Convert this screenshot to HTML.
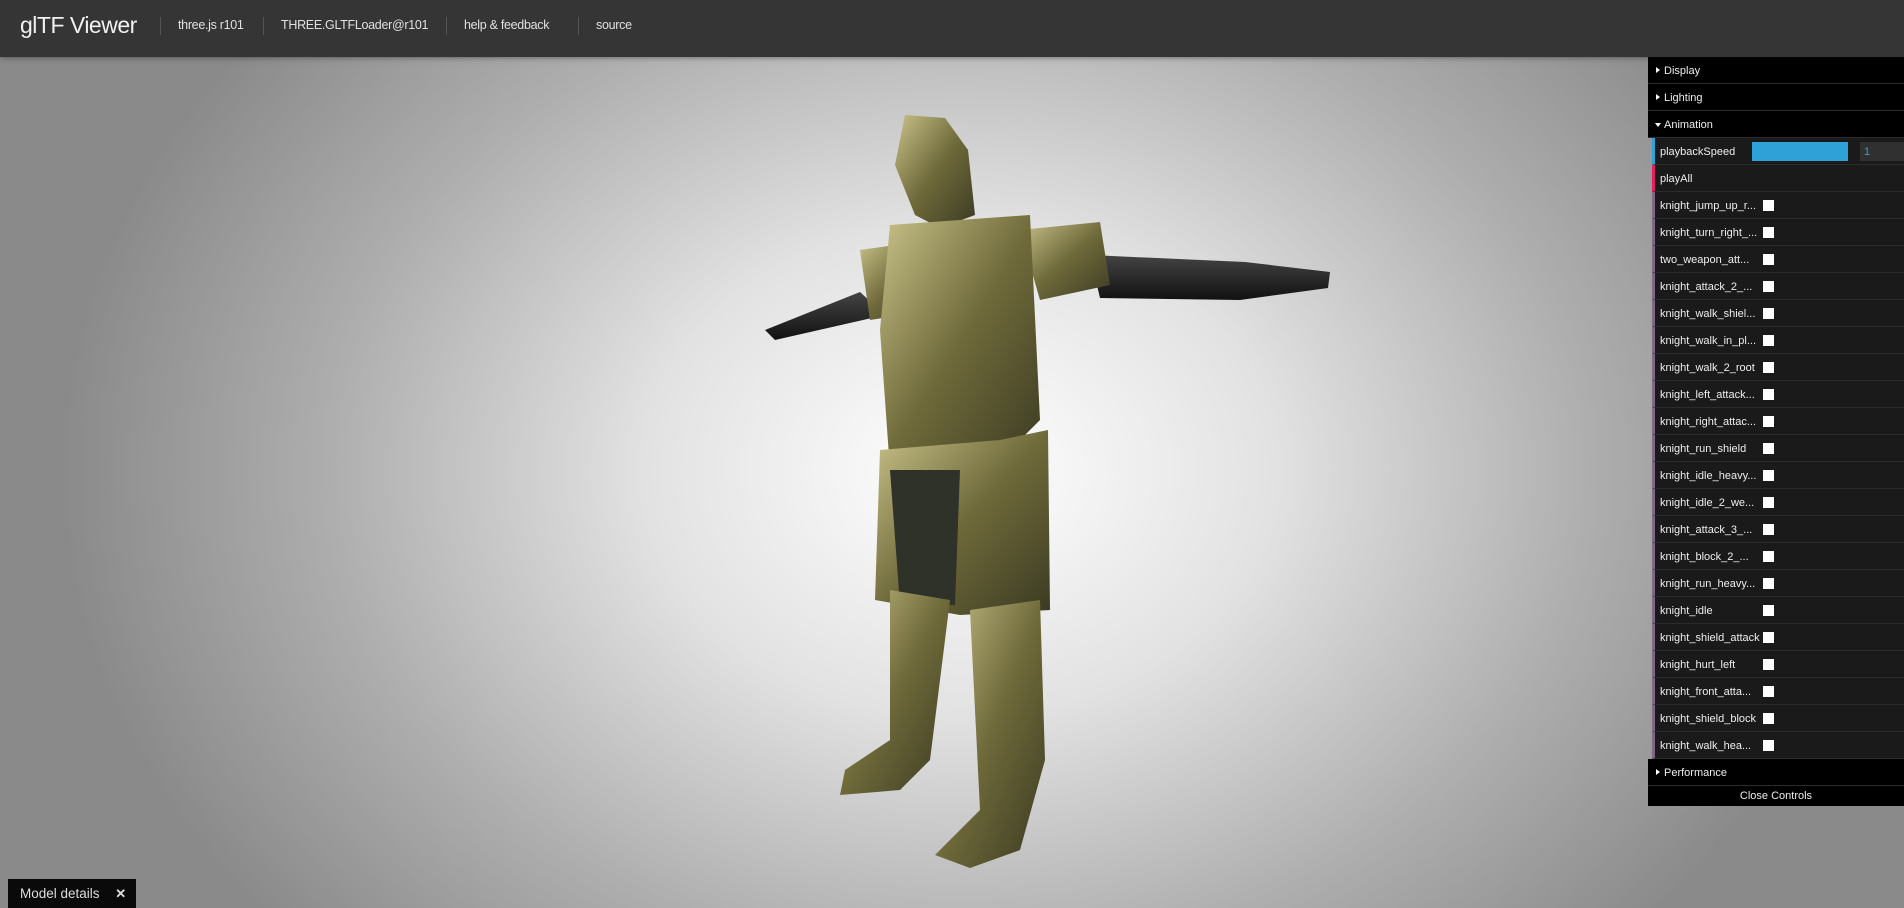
<!DOCTYPE html>
<html><head><meta charset="utf-8"><style>
*{margin:0;padding:0;box-sizing:border-box}
body{width:1904px;height:908px;overflow:hidden;position:relative;font-family:"Liberation Sans",sans-serif;background:radial-gradient(ellipse 900px 700px at 960px 470px,#ffffff 0%,#e2e2e2 35%,#aeaeae 70%,#8a8a8a 100%)}
.hdr{position:absolute;left:0;top:0;width:1904px;height:57px;background:#353535;color:#eee;box-shadow:0 0 6px rgba(0,0,0,.5)}
.hdr span{position:absolute;top:0;line-height:51px;font-size:12.5px;letter-spacing:-0.3px;color:#e0e0e0}
.hdr .t{font-size:23px;left:20px;color:#f0f0f0;letter-spacing:-0.5px}
.sep{position:absolute;top:17px;width:1px;height:18px;background:#555}
.gui{position:absolute;left:1648px;top:57px;width:256px;font-size:11px;color:#eee}
.row{height:27px;line-height:29px;border-bottom:1px solid #2c2c2c;position:relative}
.f{background:#000;padding-left:16px}
.f:before{content:"";position:absolute;left:8px;top:10px;border-left:4px solid #fff;border-top:3px solid transparent;border-bottom:3px solid transparent}
.f.o:before{left:7px;top:12px;border-top:4px solid #fff;border-left:3px solid transparent;border-right:3px solid transparent;border-bottom:0}
.it{background:#1a1a1a;margin-left:4px;border-left:3px solid #806787;padding-left:5px}
.cb{position:absolute;left:108px;top:8px;width:11px;height:11px;background:#fff}
.cl{background:#000;height:20px;line-height:21px;text-align:center}
.md{position:absolute;left:8px;top:879px;width:128px;height:29px;background:#0a0a0a;color:#ddd;font-size:13.5px;line-height:29px;padding-left:12px}
</style></head><body>
<svg style="position:absolute;left:0;top:0" width="1904" height="908">
<defs><linearGradient id="g" x1="0" y1="0" x2="1" y2="1"><stop offset="0" stop-color="#c9c28a"/><stop offset=".5" stop-color="#6f6a3a"/><stop offset="1" stop-color="#3a3a22"/></linearGradient>
<linearGradient id="a" x1="0" y1="0" x2="0" y2="1"><stop offset="0" stop-color="#444"/><stop offset="1" stop-color="#111"/></linearGradient></defs>
<path d="M765 330 L860 292 L885 315 L775 340 Z" fill="url(#a)"/>
<path d="M1090 255 L1245 262 L1330 272 L1328 288 L1240 300 L1100 298 Z" fill="url(#a)"/>
<path d="M1020 230 L1100 222 L1110 285 L1040 300 Z" fill="url(#g)"/>
<path d="M860 250 L930 240 L935 310 L870 320 Z" fill="url(#g)"/>
<path d="M905 115 L945 118 L968 150 L975 215 L940 228 L915 215 L895 165 Z" fill="url(#g)"/>
<path d="M890 225 L1030 215 L1040 420 L1000 460 L890 470 L880 330 Z" fill="url(#g)"/>
<path d="M880 450 L1000 440 L1048 430 L1050 610 L960 615 L875 600 Z" fill="url(#g)"/>
<path d="M890 470 L960 470 L955 605 L900 605 Z" fill="#2e3228"/>
<path d="M890 590 L950 600 L930 760 L900 790 L840 795 L845 770 L890 740 Z" fill="url(#g)"/>
<path d="M970 610 L1040 600 L1045 760 L1020 850 L970 868 L935 855 L980 810 Z" fill="url(#g)"/>
</svg>
<div class="hdr"><span class="t">glTF Viewer</span><div class="sep" style="left:160px"></div><span style="left:178px">three.js r101</span><div class="sep" style="left:263px"></div><span style="left:281px">THREE.GLTFLoader@r101</span><div class="sep" style="left:446px"></div><span style="left:464px">help &amp; feedback</span><div class="sep" style="left:578px"></div><span style="left:596px">source</span></div>
<div class="gui">
<div class="row f">Display</div>
<div class="row f">Lighting</div>
<div class="row f o">Animation</div>
<div class="row it" style="border-left-color:#2fa1d6">playbackSpeed<div style="position:absolute;left:97px;top:4px;width:96px;height:19px;background:#2fa1d6"></div><div style="position:absolute;left:205px;top:4px;width:48px;height:19px;background:#303030;color:#2fa1d6;line-height:21px;padding-left:4px">1</div></div>
<div class="row it" style="border-left-color:#e61d5f">playAll</div>
<div class="row it">knight_jump_up_r...<div class="cb"></div></div>
<div class="row it">knight_turn_right_...<div class="cb"></div></div>
<div class="row it">two_weapon_att...<div class="cb"></div></div>
<div class="row it">knight_attack_2_...<div class="cb"></div></div>
<div class="row it">knight_walk_shiel...<div class="cb"></div></div>
<div class="row it">knight_walk_in_pl...<div class="cb"></div></div>
<div class="row it">knight_walk_2_root<div class="cb"></div></div>
<div class="row it">knight_left_attack...<div class="cb"></div></div>
<div class="row it">knight_right_attac...<div class="cb"></div></div>
<div class="row it">knight_run_shield<div class="cb"></div></div>
<div class="row it">knight_idle_heavy...<div class="cb"></div></div>
<div class="row it">knight_idle_2_we...<div class="cb"></div></div>
<div class="row it">knight_attack_3_...<div class="cb"></div></div>
<div class="row it">knight_block_2_...<div class="cb"></div></div>
<div class="row it">knight_run_heavy...<div class="cb"></div></div>
<div class="row it">knight_idle<div class="cb"></div></div>
<div class="row it">knight_shield_attack<div class="cb"></div></div>
<div class="row it">knight_hurt_left<div class="cb"></div></div>
<div class="row it">knight_front_atta...<div class="cb"></div></div>
<div class="row it">knight_shield_block<div class="cb"></div></div>
<div class="row it">knight_walk_hea...<div class="cb"></div></div>
<div class="row f">Performance</div>
<div class="cl">Close Controls</div>
</div>
<div class="md">Model details <b style="margin-left:12px;font-size:13px">✕</b></div>
</body></html>
